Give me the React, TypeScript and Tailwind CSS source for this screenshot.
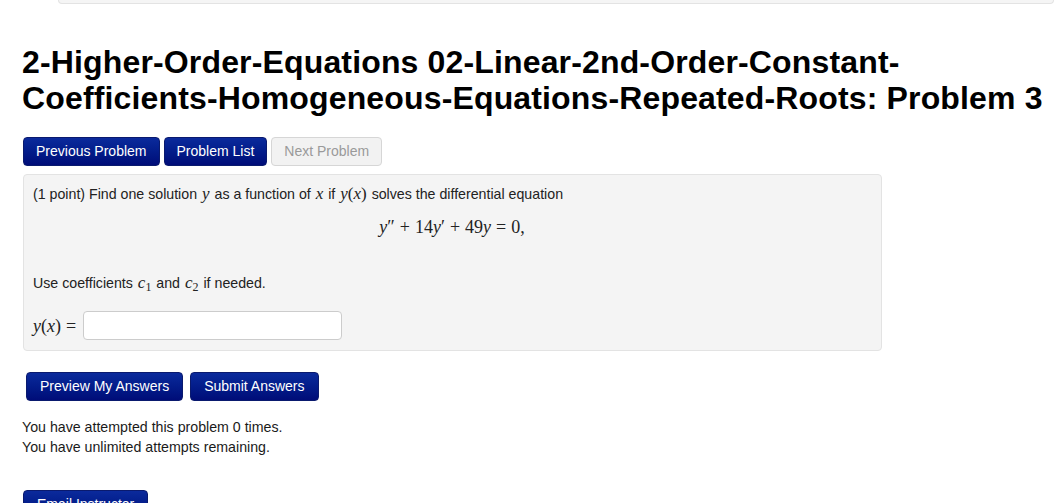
import React from "react";

const sans = { fontFamily: '"Liberation Sans", Arial, Helvetica, sans-serif' };
const serif = { fontFamily: '"Liberation Serif", "Times New Roman", serif' };

function NavBtn({ children, disabled, wide }: { children: React.ReactNode; disabled?: boolean; wide?: boolean }) {
  if (disabled) {
    return (
      <span className="inline-flex items-center h-[29px] px-[12px] rounded-[4px] border border-[#d6d6d6] bg-[#f2f2f2] text-[#9a9a9a] text-[14px]">
        {children}
      </span>
    );
  }
  return (
    <span
      className={
        (wide ? "px-[13px] " : "px-[12px] ") +
        "inline-flex items-center h-[29px] rounded-[4px] border border-[#0a1a6e] bg-gradient-to-b from-[#0b2a9c] to-[#000c78] text-white text-[14px]"
      }
    >
      {children}
    </span>
  );
}

function M({ children }: { children: React.ReactNode }) {
  return (
    <span className="text-[17px] mx-[1px]" style={serif}>
      {children}
    </span>
  );
}

export default function App() {
  return (
    <div className="w-[1058px] h-[503px] overflow-hidden bg-white text-[#1a1a1a]" style={sans}>
      <div className="ml-[58px] mr-[4px] h-[4px] bg-[#f5f5f5] border-x border-b border-[#e3e3e3] rounded-b-[4px]" />
      <div className="pl-[22px]">
        <h2 className="mt-[40px] text-[32px] leading-[36px] font-bold text-black tracking-[0.15px]">
          2-Higher-Order-Equations 02-Linear-2nd-Order-Constant-
          <br />
          Coefficients-Homogeneous-Equations-Repeated-Roots: Problem 3
        </h2>
        <div className="mt-[21px] flex gap-[4px] pl-[1px]">
          <NavBtn>Previous Problem</NavBtn>
          <NavBtn>Problem List</NavBtn>
          <NavBtn disabled>Next Problem</NavBtn>
        </div>
        <div className="mt-[8px] ml-[1px] w-[859px] h-[177px] bg-[#f4f4f4] border border-[#e3e3e3] rounded-[4px] pl-[9px] pt-[9px] text-[14.2px] leading-[20px] text-[#222]">
          <div>
            (1 point) Find one solution{" "}
            <M>
              <i>y</i>
            </M>{" "}
            as a function of{" "}
            <M>
              <i>x</i>
            </M>{" "}
            if{" "}
            <M>
              <i>y</i>(<i>x</i>)
            </M>{" "}
            solves the differential equation
          </div>
          <div className="mt-[13px] pr-[10px] text-center text-[18px] leading-[20px]" style={serif}>
            <i>y</i>″<span className="mx-[5px]">+</span>14<i>y</i>′<span className="mx-[5px]">+</span>49<i>y</i>
            <span className="mx-[5px]">=</span>0,
          </div>
          <div className="mt-[36px]">
            Use coefficients{" "}
            <M>
              <i>c</i>
              <sub className="text-[12px]">1</sub>
            </M>{" "}
            and{" "}
            <M>
              <i>c</i>
              <sub className="text-[12px]">2</sub>
            </M>{" "}
            if needed.
          </div>
          <div className="mt-[18px] flex items-center gap-[4px]">
            <span className="w-[46px] text-[18px] whitespace-nowrap" style={serif}>
              <i>y</i>(<i>x</i>)<span className="ml-[5px]">=</span>
            </span>
            <span className="inline-block w-[259px] h-[29px] bg-white border border-[#cccccc] rounded-[4px]" />
          </div>
        </div>
        <div className="mt-[21px] ml-[4px] flex gap-[7px]">
          <NavBtn wide>Preview My Answers</NavBtn>
          <NavBtn wide>Submit Answers</NavBtn>
        </div>
        <div className="mt-[16px] text-[14.2px] leading-[20px] text-[#1a1a1a]">
          <div>You have attempted this problem 0 times.</div>
          <div>You have unlimited attempts remaining.</div>
        </div>
        <div className="mt-[33px] ml-[1px]">
          <NavBtn wide>Email Instructor</NavBtn>
        </div>
      </div>
    </div>
  );
}
